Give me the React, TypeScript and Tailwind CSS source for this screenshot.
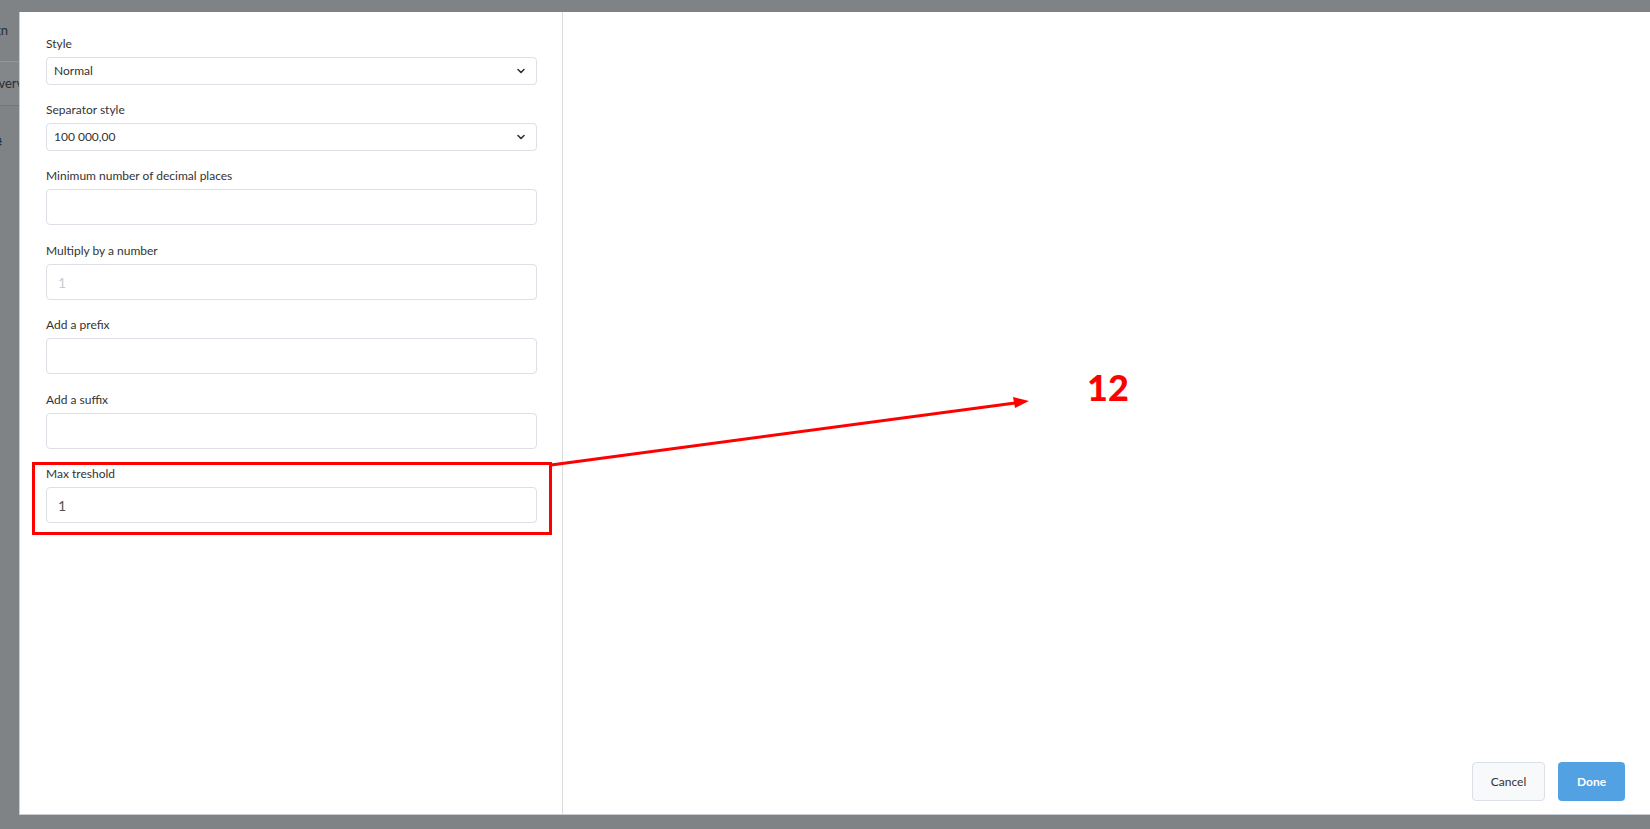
import { ChevronDown } from 'lucide-react';

const font = { fontFamily: 'Lato, "Noto Sans", sans-serif' };

function SelectField({ label, value }: { label: string; value: string }) {
  return (
    <div className="mb-[17px]">
      <div className="text-[12px] leading-4 text-[#333] mb-[5px]">{label}</div>
      <div className="h-[28px] border border-[#dcdfe6] rounded-[4px] flex items-center justify-between pl-[7px] pr-[9px] text-[12px] text-[#333]">
        <span>{value}</span>
        <ChevronDown size={12} strokeWidth={3.2} className="text-[#333]" />
      </div>
    </div>
  );
}

function InputField({
  label,
  value,
  placeholder,
  gap = 'mb-[18px]',
}: {
  label: string;
  value?: string;
  placeholder?: string;
  gap?: string;
}) {
  return (
    <div className={gap}>
      <div className="text-[12px] leading-4 text-[#333] mb-[5px]">{label}</div>
      <input
        readOnly
        value={value ?? ''}
        placeholder={placeholder}
        className="block w-full h-[36px] border border-[#dcdfe6] rounded-[4px] px-[11px] text-[14px] text-[#555] placeholder:text-[#c8ccd2] outline-none"
        style={font}
      />
    </div>
  );
}

export default function App() {
  return (
    <div className="relative w-[1650px] h-[829px] overflow-hidden bg-[#808386]" style={font}>
      {/* ── Backdrop page (mostly hidden) ── */}
      <div className="absolute left-0 top-0 w-[19px] text-[13px] text-[#2c2e30]">
        <div className="h-[62px] flex items-center justify-end pr-[11px] border-b border-[#94979a]">
          <span className="whitespace-nowrap">Design</span>
        </div>
        <div className="h-[44px] flex items-center bg-[#84878a] border-b border-[#747779]">
          <span className="whitespace-nowrap -ml-[12px]">Overview</span>
        </div>
        <div className="h-[72px] flex items-center">
          <span className="-ml-[6px] text-[14px] font-bold">#</span>
        </div>
      </div>

      {/* ── Modal ── */}
      <div className="absolute left-[19px] top-[12px] w-[1631px] h-[803px] bg-white border-l border-b border-[#c9ccd0] flex">
        <div className="w-[543px] h-full border-r border-[#dcdcdc] pl-[26px] pr-[25px] pt-[24px]">
          <SelectField label="Style" value="Normal" />
          <SelectField label="Separator style" value="100 000,00" />
          <InputField label="Minimum number of decimal places" gap="mb-[18px]" />
          <InputField label="Multiply by a number" placeholder="1" gap="mb-[17px]" />
          <InputField label="Add a prefix" gap="mb-[18px]" />
          <InputField label="Add a suffix" gap="mb-[17px]" />
          <InputField label="Max treshold" value="1" />
        </div>
        <div className="flex-1 flex items-end justify-end pr-[25px] pb-[13px] gap-[13px]">
          <button className="w-[73px] h-[39px] rounded-[4px] border border-[#dcdfe6] bg-[#f8f9fb] text-[12px] text-[#333]">
            Cancel
          </button>
          <button className="w-[67px] h-[39px] rounded-[4px] bg-[#52a1e3] text-[12px] font-bold text-white">
            Done
          </button>
        </div>
      </div>

      {/* ── Annotation ── */}
      <div className="absolute left-[32px] top-[462px] w-[520px] h-[73px] border-[3px] border-[#ff0000]" />
      <svg className="absolute left-0 top-0 pointer-events-none" width="1650" height="829">
        <line x1="551" y1="465" x2="1015" y2="403" stroke="#ff0000" strokeWidth="3" />
        <polygon points="1029,401 1013,397 1015,408" fill="#ff0000" />
      </svg>
      <div className="absolute left-[1087px] top-[369px] text-[36px] leading-none font-black text-[#ff0000]">12</div>
    </div>
  );
}
